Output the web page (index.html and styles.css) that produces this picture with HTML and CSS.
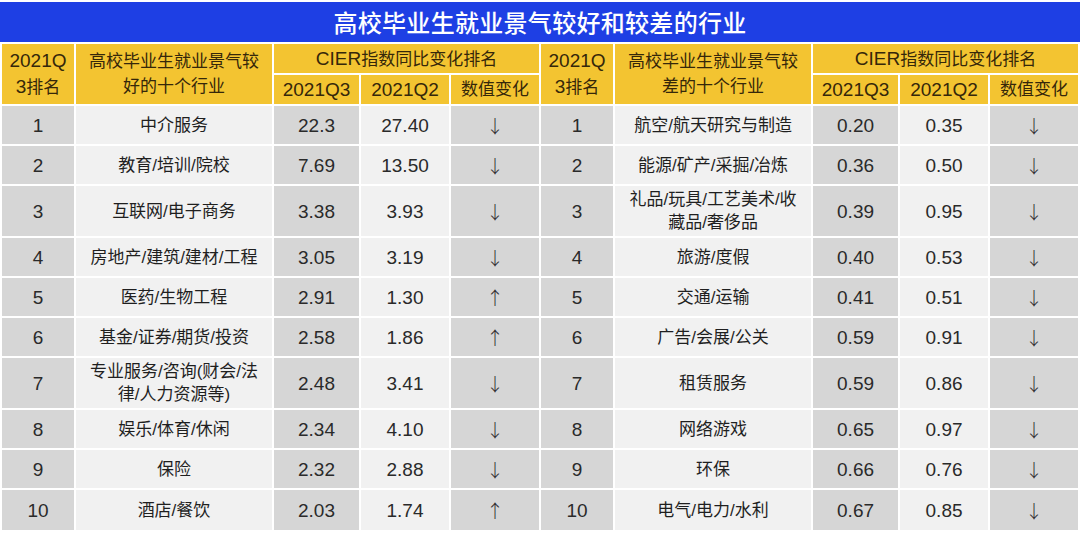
FILE: index.html
```html
<!DOCTYPE html>
<html lang="zh-CN">
<head>
<meta charset="utf-8">
<title>高校毕业生就业景气较好和较差的行业</title>
<link rel="stylesheet" href="styles.css">
</head>
<body>
<div class="title">高校毕业生就业景气较好和较差的行业</div>
<table class="grid">
  <colgroup>
    <col class="c-rank"><col class="c-name"><col class="c-q3"><col class="c-q2"><col class="c-chg">
    <col class="c-rank"><col class="c-name"><col class="c-q3"><col class="c-q2"><col class="c-chg">
  </colgroup>
  <thead>
    <tr class="h1">
      <th rowspan="2"><span class="lat">2021Q</span><br><span class="lat">3</span>排名</th>
      <th rowspan="2">高校毕业生就业景气较<br>好的十个行业</th>
      <th colspan="3"><span class="lat">CIER</span>指数同比变化排名</th>
      <th rowspan="2"><span class="lat">2021Q</span><br><span class="lat">3</span>排名</th>
      <th rowspan="2">高校毕业生就业景气较<br>差的十个行业</th>
      <th colspan="3"><span class="lat">CIER</span>指数同比变化排名</th>
    </tr>
    <tr class="h2">
      <th class="lat">2021Q3</th><th class="lat">2021Q2</th><th>数值变化</th>
      <th class="lat">2021Q3</th><th class="lat">2021Q2</th><th>数值变化</th>
    </tr>
  </thead>
  <tbody>
    <tr class="r">
      <td class="num">1</td><td>中介服务</td><td class="num">22.3</td><td class="num">27.40</td><td class="arr">↓</td>
      <td class="num">1</td><td>航空/航天研究与制造</td><td class="num">0.20</td><td class="num">0.35</td><td class="arr">↓</td>
    </tr>
    <tr class="r">
      <td class="num">2</td><td>教育/培训/院校</td><td class="num">7.69</td><td class="num">13.50</td><td class="arr">↓</td>
      <td class="num">2</td><td>能源/矿产/采掘/冶炼</td><td class="num">0.36</td><td class="num">0.50</td><td class="arr">↓</td>
    </tr>
    <tr class="tall">
      <td class="num">3</td><td>互联网/电子商务</td><td class="num">3.38</td><td class="num">3.93</td><td class="arr">↓</td>
      <td class="num">3</td><td>礼品/玩具/工艺美术/收<br>藏品/奢侈品</td><td class="num">0.39</td><td class="num">0.95</td><td class="arr">↓</td>
    </tr>
    <tr class="r">
      <td class="num">4</td><td>房地产/建筑/建材/工程</td><td class="num">3.05</td><td class="num">3.19</td><td class="arr">↓</td>
      <td class="num">4</td><td>旅游/度假</td><td class="num">0.40</td><td class="num">0.53</td><td class="arr">↓</td>
    </tr>
    <tr class="r">
      <td class="num">5</td><td>医药/生物工程</td><td class="num">2.91</td><td class="num">1.30</td><td class="arr">↑</td>
      <td class="num">5</td><td>交通/运输</td><td class="num">0.41</td><td class="num">0.51</td><td class="arr">↓</td>
    </tr>
    <tr class="r">
      <td class="num">6</td><td>基金/证券/期货/投资</td><td class="num">2.58</td><td class="num">1.86</td><td class="arr">↑</td>
      <td class="num">6</td><td>广告/会展/公关</td><td class="num">0.59</td><td class="num">0.91</td><td class="arr">↓</td>
    </tr>
    <tr class="tall">
      <td class="num">7</td><td>专业服务/咨询(财会/法<br>律/人力资源等)</td><td class="num">2.48</td><td class="num">3.41</td><td class="arr">↓</td>
      <td class="num">7</td><td>租赁服务</td><td class="num">0.59</td><td class="num">0.86</td><td class="arr">↓</td>
    </tr>
    <tr class="r">
      <td class="num">8</td><td>娱乐/体育/休闲</td><td class="num">2.34</td><td class="num">4.10</td><td class="arr">↓</td>
      <td class="num">8</td><td>网络游戏</td><td class="num">0.65</td><td class="num">0.97</td><td class="arr">↓</td>
    </tr>
    <tr class="r">
      <td class="num">9</td><td>保险</td><td class="num">2.32</td><td class="num">2.88</td><td class="arr">↓</td>
      <td class="num">9</td><td>环保</td><td class="num">0.66</td><td class="num">0.76</td><td class="arr">↓</td>
    </tr>
    <tr class="r last">
      <td class="num">10</td><td>酒店/餐饮</td><td class="num">2.03</td><td class="num">1.74</td><td class="arr">↑</td>
      <td class="num">10</td><td>电气/电力/水利</td><td class="num">0.67</td><td class="num">0.85</td><td class="arr">↓</td>
    </tr>
  </tbody>
</table>
</body>
</html>
```

FILE: styles.css
```css
html, body {
  margin: 0;
  padding: 0;
  background: #ffffff;
}

body {
  font-family: "Liberation Sans", "Noto Sans CJK SC", sans-serif;
  color: #252525;
}

.title {
  margin-top: 2px;
  height: 40px;
  line-height: 40px;
  background: #1e3fe4;
  color: #ffffff;
  font-family: "Noto Sans CJK SC", sans-serif;
  font-size: 24px;
  font-weight: 500;
  text-align: center;
  letter-spacing: 0.3px;
}

.grid {
  width: 1080px;
  table-layout: fixed;
  border-collapse: separate;
  border-spacing: 2px;
}

.c-rank { width: 72px; }
.c-name { width: 196px; }
.c-q3 { width: 85px; }
.c-q2 { width: 88px; }
.c-chg { width: 88px; }

.grid th,
.grid td {
  padding: 0;
  text-align: center;
  vertical-align: middle;
  white-space: nowrap;
}

.grid th {
  background: #f3c431;
  color: #35270a;
  font-family: "Liberation Sans", "Noto Sans CJK SC", sans-serif;
  font-weight: 400;
  font-size: 17px;
  line-height: 25px;
}

.grid th .lat,
.grid th.lat {
  font-size: 19px;
}

.h1 th { height: 29px; }
.h2 th { height: 29px; }

.grid td {
  font-size: 17px;
  line-height: 23px;
  background: #f1f1f1;
  color: #1f1f1f;
}

.grid tbody td:nth-child(5n+1),
.grid tbody td:nth-child(5n+3),
.grid tbody td:nth-child(5n) {
  background: #d6d6d6;
}

.grid td.num {
  font-size: 19px;
  color: #2a2a2a;
}

.grid td.arr {
  font-family: "Noto Sans CJK SC", sans-serif;
  font-size: 18px;
  font-weight: 300;
  color: #2e2e2e;
}

.r td { height: 38px; }
.tall td { height: 50px; }
.last td { height: 40px; }
```
